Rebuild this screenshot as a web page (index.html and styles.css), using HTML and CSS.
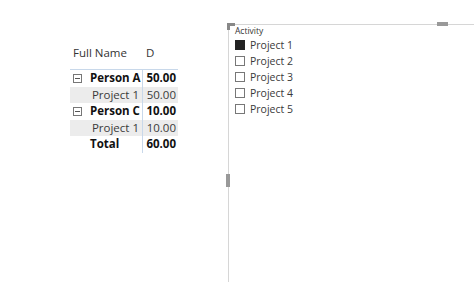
FILE: index.html
```html
<!DOCTYPE html>
<html>
<head>
<meta charset="utf-8">
<link rel="stylesheet" href="styles.css">
</head>
<body>
<div class="page">
  <div class="matrix-area">
    <div class="matrix">
      <div class="hdr">
        <div class="c-name">Full Name</div>
        <div class="c-val">D</div>
      </div>
      <div class="row bold">
        <div class="c-name"><span class="minus"></span>Person A</div>
        <div class="c-val">50.00</div>
      </div>
      <div class="row sub">
        <div class="c-name right">Project 1</div>
        <div class="c-val">50.00</div>
      </div>
      <div class="row bold">
        <div class="c-name"><span class="minus"></span>Person C</div>
        <div class="c-val">10.00</div>
      </div>
      <div class="row sub">
        <div class="c-name right">Project 1</div>
        <div class="c-val">10.00</div>
      </div>
      <div class="row bold total">
        <div class="c-name">Total</div>
        <div class="c-val">60.00</div>
      </div>
    </div>
  </div>
  <div class="slicer">
    <span class="corner"></span>
    <span class="handle-top"></span>
    <span class="handle-left"></span>
    <div class="slicer-title">Activity</div>
    <ul class="items">
      <li><span class="box checked"></span>Project 1</li>
      <li><span class="box"></span>Project 2</li>
      <li><span class="box"></span>Project 3</li>
      <li><span class="box"></span>Project 4</li>
      <li><span class="box"></span>Project 5</li>
    </ul>
  </div>
</div>
</body>
</html>
```
FILE: styles.css
```css
html, body { margin: 0; padding: 0; background: #fff; }
body { font-family: "Open Sans", "Noto Sans", sans-serif; color: #252423; }
.page { display: flex; width: 474px; height: 282px; overflow: hidden; }
.matrix-area { width: 228px; padding: 44px 0 0 70px; box-sizing: border-box; }
.matrix { width: 108px; font-size: 11.5px; }
.hdr, .row { display: flex; height: 16.5px; line-height: 16.5px; }
.hdr { height: 25px; line-height: 18px; border-bottom: 1px solid #c8d8ea; color: #333; }
.hdr .c-name { padding-left: 3px; }
.c-name { width: 73px; box-sizing: border-box; white-space: nowrap; display: flex; align-items: center; border-right: 1px solid #c8d8ea; }
.hdr .c-name { border-right: none; align-items: flex-start; }
.c-val { flex: 1; text-align: right; padding-right: 2px; white-space: nowrap; }
.hdr .c-val { text-align: left; padding-left: 3px; }
.row .c-name { padding-left: 3px; }
.row.bold { font-weight: 700; color: #111; }
.row.sub { background: #ececec; color: #3a3a3a; }
.c-name.right { justify-content: flex-end; padding-right: 3px; }
.total .c-name { padding-left: 20px; }
.minus { width: 9px; height: 9px; border: 1px solid #777; box-sizing: border-box; margin-right: 8px; position: relative; flex: none; }
.minus::after { content: ""; position: absolute; left: 1px; right: 1px; top: 3px; height: 1px; background: #555; }
.slicer { position: relative; flex: 1; margin-top: 24px; border-top: 1px solid #d6d6d6; border-left: 1px solid #d6d6d6; padding: 0 0 0 6px; }
.corner { position: absolute; left: -2px; top: -2px; width: 8px; height: 3px; background: #888; }
.corner::after { content: ""; position: absolute; left: 0; top: 0; width: 3px; height: 7px; background: #888; }
.handle-top { position: absolute; left: 208px; top: -3px; width: 11px; height: 4px; background: #999; }
.handle-left { position: absolute; left: -3px; top: 149px; width: 4px; height: 13px; background: #999; }
.slicer-title { font-size: 8.5px; color: #333; line-height: 11px; }
.items { list-style: none; margin: 1px 0 0 0; padding: 0; }
.items li { display: flex; align-items: center; height: 16px; font-size: 10.5px; color: #3a3a3a; }
.box { width: 10px; height: 10px; box-sizing: border-box; border: 1px solid #777; margin-right: 5px; }
.box.checked { background: #222; border-color: #222; }
```
